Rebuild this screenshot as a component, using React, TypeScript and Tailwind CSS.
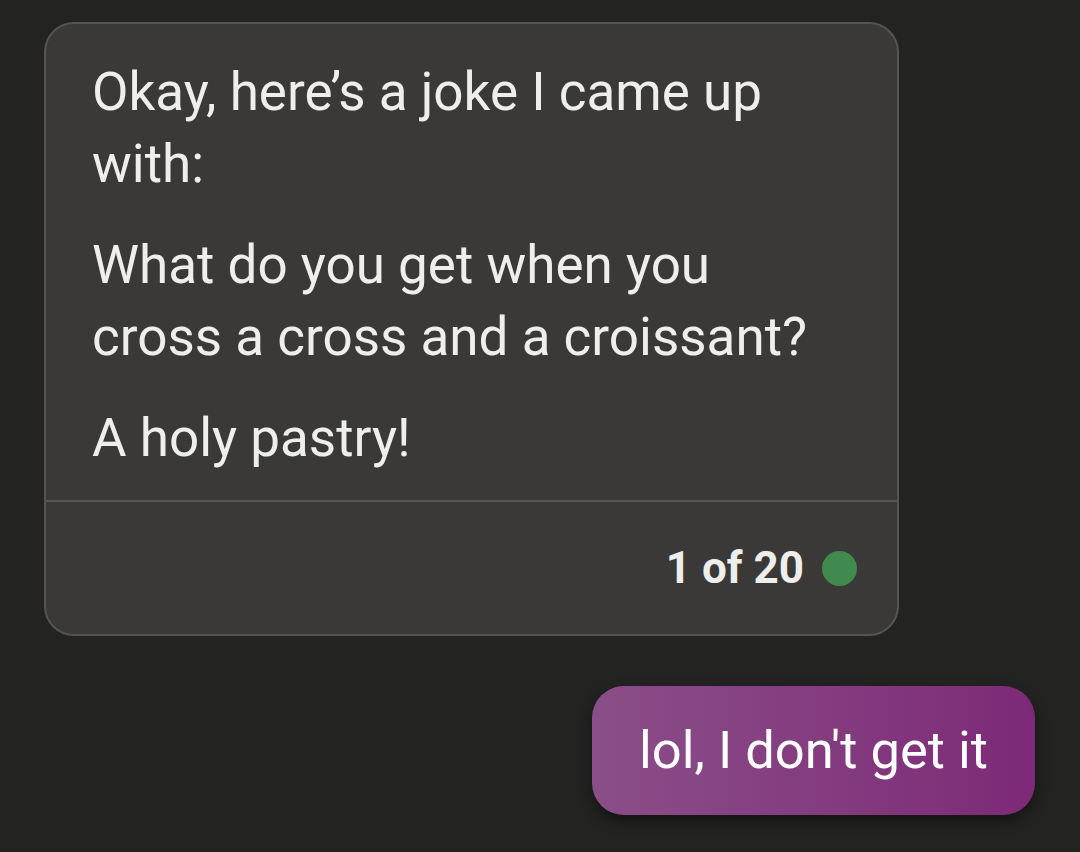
export default function App() {
  return (
    <div
      className="w-[1080px] h-[852px] overflow-hidden bg-[#232322] flex flex-col"
      style={{ fontFamily: "Roboto, 'Noto Sans', sans-serif" }}
    >
      <div className="ml-[44px] mt-[22px] w-[855px] rounded-[30px] border-2 border-[#555453] bg-[#3a3938] text-[#eeeeec]">
        <div className="pl-[46px] pr-[66px] pt-[32px] pb-[26px] text-[53px] leading-[72px] flex flex-col gap-[29px]">
          <p>Okay, here’s a joke I came up with:</p>
          <p>What do you get when you cross a cross and a croissant?</p>
          <p>A holy pastry!</p>
        </div>
        <div className="border-t-2 border-[#555453] h-[134px] flex items-center justify-end pr-[40px] gap-[18px]">
          <span className="text-[44px] font-bold">1 of 20</span>
          <span className="w-[35px] h-[35px] rounded-full bg-[#418a4f]" />
        </div>
      </div>
      <div className="flex justify-end pr-[45px] mt-[50px]">
        <div className="h-[129px] w-[443px] rounded-[32px] bg-gradient-to-r from-[#8a4e88] to-[#7d2977] shadow-[0_6px_14px_rgba(0,0,0,0.45)] flex items-center justify-center text-white text-[52.5px]">
          lol, I don't get it
        </div>
      </div>
    </div>
  );
}
